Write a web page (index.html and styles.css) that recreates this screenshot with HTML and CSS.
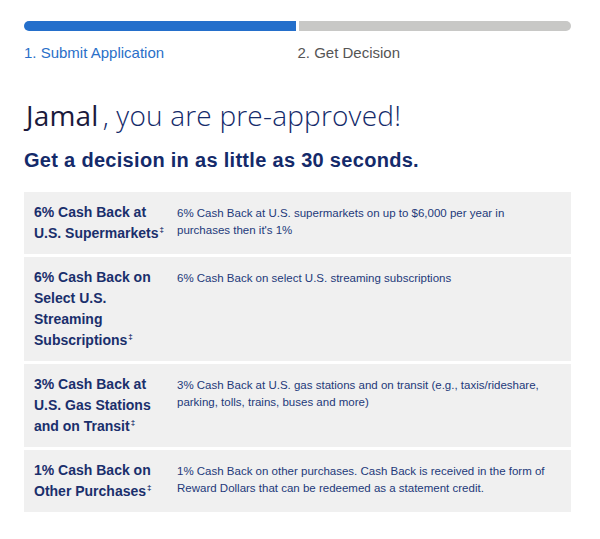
FILE: index.html
```html
<!DOCTYPE html>
<html>
<head>
<meta charset="utf-8">
<link rel="stylesheet" href="styles.css">
</head>
<body>
<div class="page">
  <div class="progress">
    <div class="seg seg-active"></div>
    <div class="seg seg-rest"></div>
  </div>
  <div class="steps">
    <div class="step step-active">1. Submit Application</div>
    <div class="step">2. Get Decision</div>
  </div>
  <h1 class="title"><span class="name">Jamal</span>, you are pre-approved!</h1>
  <h2 class="subtitle">Get a decision in as little as 30 seconds.</h2>
  <div class="benefits">
    <div class="row">
      <div class="label">6% Cash Back at U.S. Supermarkets<sup>‡</sup></div>
      <div class="desc">6% Cash Back at U.S. supermarkets on up to $6,000 per year in purchases then it's 1%</div>
    </div>
    <div class="row">
      <div class="label">6% Cash Back on Select U.S. Streaming Subscriptions<sup>‡</sup></div>
      <div class="desc">6% Cash Back on select U.S. streaming subscriptions</div>
    </div>
    <div class="row">
      <div class="label">3% Cash Back at U.S. Gas Stations and on Transit<sup>‡</sup></div>
      <div class="desc">3% Cash Back at U.S. gas stations and on transit (e.g., taxis/rideshare, parking, tolls, trains, buses and more)</div>
    </div>
    <div class="row">
      <div class="label">1% Cash Back on Other Purchases<sup>‡</sup></div>
      <div class="desc">1% Cash Back on other purchases. Cash Back is received in the form of Reward Dollars that can be redeemed as a statement credit.</div>
    </div>
  </div>
</div>
</body>
</html>
```
FILE: styles.css
```css
html, body {
  margin: 0;
  padding: 0;
  background: #ffffff;
}
body {
  font-family: "Liberation Sans", Arial, sans-serif;
}
.page {
  width: 547px;
  padding: 21px 0 0 24px;
}
.progress {
  display: flex;
  gap: 3px;
  height: 10px;
}
.seg {
  height: 10px;
}
.seg-active {
  width: 272px;
  background: #246fcb;
  border-radius: 5px 0 0 5px;
}
.seg-rest {
  flex: 1;
  background: #c8c8c6;
  border-radius: 0 5px 5px 0;
}
.steps {
  display: flex;
  margin-top: 13px;
  font-size: 15px;
  line-height: 18px;
}
.step {
  width: 274px;
  color: #555555;
}
.step-active {
  color: #2a6fc8;
}
.title {
  margin: 35px 0 0 2px;
  font-family: "Open Sans", sans-serif;
  font-weight: 300;
  font-size: 28px;
  line-height: 36px;
  color: #142a6a;
  letter-spacing: 0.2px;
}
.name {
  color: #1b1a3c;
  font-weight: 400;
  margin-right: 4px;
}
.subtitle {
  margin: 15px 0 0 0;
  font-size: 20px;
  line-height: 24px;
  font-weight: 700;
  letter-spacing: 0.3px;
  color: #142a6a;
}
.benefits {
  margin-top: 20px;
  display: flex;
  flex-direction: column;
  gap: 3px;
}
.row {
  display: flex;
  background: #f0f0f0;
  padding: 10px 0;
}
.label {
  width: 133px;
  padding: 0 10px;
  font-size: 14px;
  line-height: 21px;
  font-weight: 700;
  color: #1a2f6c;
}
.label sup {
  font-size: 8px;
  line-height: 1;
  vertical-align: super;
  margin-left: 1px;
}
.desc {
  flex: 1;
  padding: 3px 21px 0 0;
  font-size: 11.5px;
  line-height: 17px;
  color: #23397a;
}
```
